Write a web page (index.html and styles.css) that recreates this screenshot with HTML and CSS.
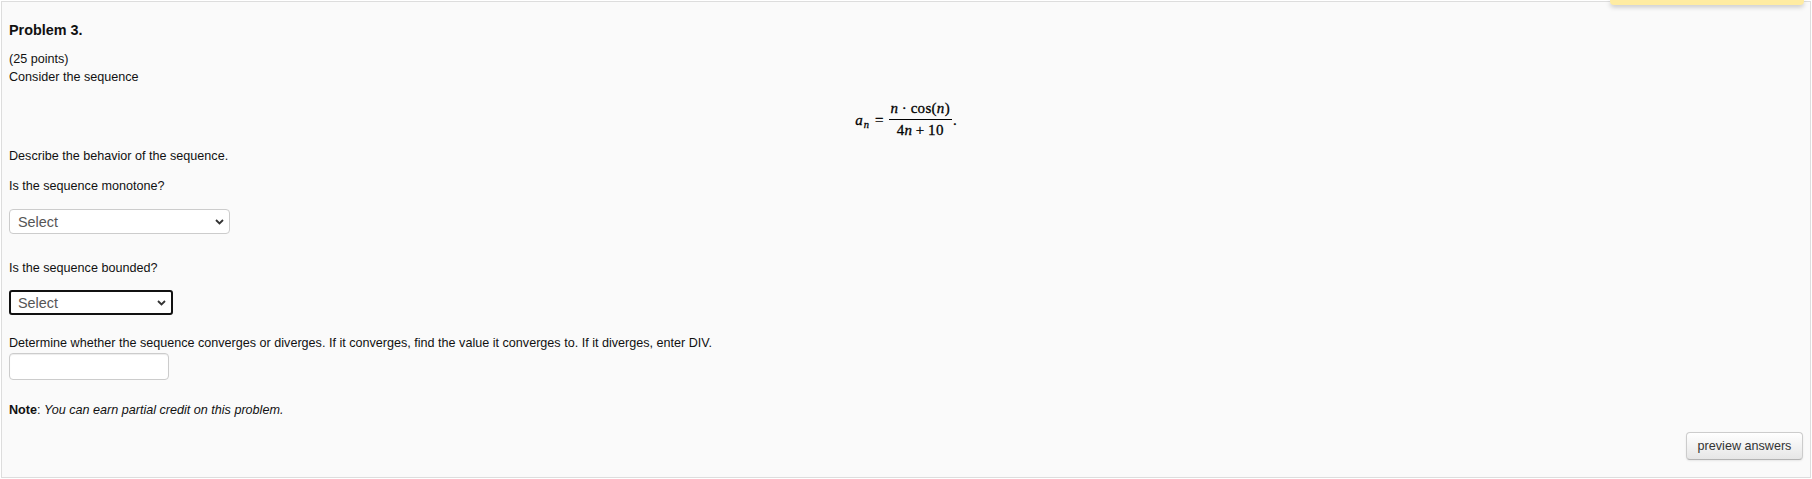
FILE: index.html
```html
<!DOCTYPE html>
<html lang="en">
<head>
<meta charset="utf-8">
<title>Problem 3</title>
<link rel="stylesheet" href="styles.css">
</head>
<body>
<div class="tab-flag"></div>
<div class="problem">
  <h3 class="title">Problem 3.</h3>
  <div class="intro">(25 points)<br>Consider the sequence</div>
  <div class="math">
    <span class="lhs"><i>a</i><sub><i>n</i></sub></span>
    <span class="rel">=</span>
    <span class="frac">
      <span class="num"><i>n</i><span class="op">&middot;</span>cos(<i>n</i>)</span>
      <span class="den">4<i>n</i><span class="op">+</span>10</span>
    </span>
    <span class="dot">.</span>
  </div>
  <p class="line">Describe the behavior of the sequence.</p>
  <p class="line gap-12">Is the sequence monotone?</p>
  <div class="field gap-14">
    <span class="select-wrap wide">
      <select class="select"><option>Select</option></select>
      <svg class="chev" width="9" height="6" viewBox="0 0 9 6"><path d="M1 1 L4.5 4.5 L8 1" fill="none" stroke="#333" stroke-width="1.8"/></svg>
    </span>
  </div>
  <p class="line gap-25">Is the sequence bounded?</p>
  <div class="field gap-13">
    <span class="select-wrap narrow focused">
      <select class="select"><option>Select</option></select>
      <svg class="chev" width="9" height="6" viewBox="0 0 9 6"><path d="M1 1 L4.5 4.5 L8 1" fill="none" stroke="#333" stroke-width="1.8"/></svg>
    </span>
  </div>
  <p class="line gap-19">Determine whether the sequence converges or diverges. If it converges, find the value it converges to. If it diverges, enter DIV.</p>
  <div class="field gap-1"><input class="answer" type="text"></div>
  <p class="line gap-21"><b>Note</b>: <i>You can earn partial credit on this problem.</i></p>
  <div class="actions"><button class="btn" type="button">preview answers</button></div>
</div>
</body>
</html>
```
FILE: styles.css
```css
html, body {
  margin: 0;
  padding: 0;
  background: #ffffff;
}
body {
  padding: 1px 1px 0 1px;
  font-family: "Liberation Sans", Arial, sans-serif;
  font-size: 12.6px;
  line-height: 18px;
  color: #111;
  position: relative;
}
.tab-flag {
  position: absolute;
  top: 0;
  left: 1610px;
  width: 194px;
  height: 5px;
  background: #ffeca2;
  border-radius: 0 0 4px 4px;
  box-shadow: 0 2px 5px rgba(0, 0, 0, 0.22);
  z-index: 2;
}
.problem {
  border: 1px solid #dddddd;
  background: #fafafa;
  padding: 0 7px 17px 7px;
}
.title {
  margin: 18px 0 0 0;
  font-size: 14.4px;
  line-height: 20px;
  font-weight: bold;
}
.intro {
  margin-top: 10px;
}
.math {
  height: 61px;
  box-sizing: border-box;
  padding-top: 14px;
  display: flex;
  justify-content: center;
  align-items: flex-start;
  font-family: "Liberation Serif", "Times New Roman", serif;
  font-size: 15px;
  line-height: 16px;
  color: #000;
  -webkit-text-stroke: 0.3px #000;
}
.math i { font-style: italic; }
.lhs, .rel, .dot {
  margin-top: 12px;
}
.lhs sub {
  font-size: 10.5px;
  line-height: 0;
  vertical-align: -3px;
  margin-left: 1px;
}
.rel {
  margin: 12px 5px 0 6px;
}
.frac {
  display: flex;
  flex-direction: column;
  align-items: center;
}
.num {
  padding: 0 2px 3px 2px;
  border-bottom: 1px solid #000;
  letter-spacing: 0.3px;
}
.den {
  padding-top: 2px;
  letter-spacing: 0.3px;
}
.op {
  margin: 0 3.5px;
}
.dot {
  margin-left: 1px;
}
.line {
  margin: 0;
}
.gap-1 { margin-top: 1px; }
.gap-12 { margin-top: 12px; }
.gap-13 { margin-top: 13px; }
.gap-14 { margin-top: 14px; }
.gap-19 { margin-top: 19px; }
.gap-21 { margin-top: 21px; }
.gap-25 { margin-top: 25px; }
.field {
  display: flex;
}
.select-wrap {
  position: relative;
  display: block;
  height: 25px;
}
.select-wrap.wide { width: 221px; }
.select-wrap.narrow { width: 164px; }
.select {
  -webkit-appearance: none;
  appearance: none;
  width: 100%;
  height: 100%;
  box-sizing: border-box;
  margin: 0;
  border: 1px solid #cccccc;
  border-radius: 4px;
  background: #ffffff;
  padding: 0 0 0 8px;
  font-family: "Liberation Sans", Arial, sans-serif;
  font-size: 14.4px;
  color: #555;
  outline: none;
}
.focused .select {
  border: 2px solid #111;
  border-radius: 3px;
  padding-left: 7px;
}
.chev {
  position: absolute;
  right: 6px;
  top: 10px;
  pointer-events: none;
}
.focused .chev {
  right: 7px;
}
.answer {
  width: 160px;
  height: 27px;
  box-sizing: border-box;
  margin: 0;
  border: 1px solid #cccccc;
  border-radius: 4px;
  background: #ffffff;
  box-shadow: inset 0 1px 1px rgba(0, 0, 0, 0.075);
  padding: 0 6px;
  font-size: 12.6px;
}
.actions {
  margin-top: 13px;
  display: flex;
  justify-content: flex-end;
}
.btn {
  width: 117px;
  height: 28px;
  box-sizing: border-box;
  margin: 0;
  padding: 0;
  border: 1px solid #cccccc;
  border-bottom-color: #b3b3b3;
  border-radius: 4px;
  background: linear-gradient(#ffffff, #e6e6e6);
  box-shadow: inset 0 1px 0 rgba(255, 255, 255, 0.2), 0 1px 2px rgba(0, 0, 0, 0.08);
  font-family: "Liberation Sans", Arial, sans-serif;
  font-size: 12.6px;
  color: #333;
}
```
